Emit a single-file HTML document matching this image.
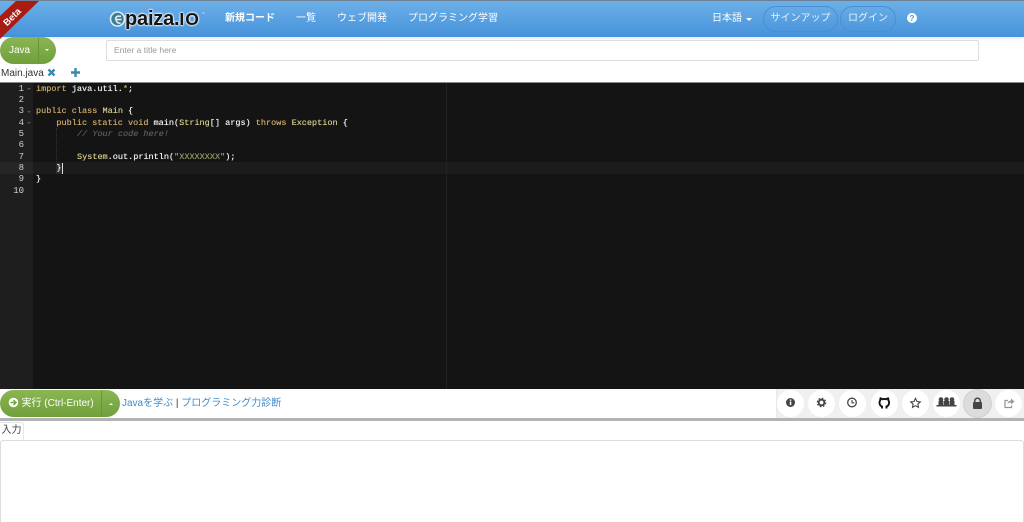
<!DOCTYPE html>
<html lang="ja"><head><meta charset="utf-8"><title>paiza.io</title>
<style>
*{box-sizing:border-box}
html,body{margin:0;padding:0;width:1024px;height:522px;overflow:hidden;background:#fff;font-family:"Liberation Sans","Noto Sans CJK JP",sans-serif;color:#333}
body{position:relative}
.a{position:absolute;white-space:nowrap}
#nav{left:0;top:0;width:1024px;height:37px;background:linear-gradient(#6cb0e8,#4692da);border-top:1px solid #6d7f92;box-shadow:0 1px 4px rgba(0,0,0,.12)}
.n{color:#fff;font-size:10px;line-height:12px;top:13px}
.b{font-weight:bold}
.pill{top:6px;height:26px;border-radius:13px;border:1px solid #4a8fd3;color:#eaf3fb;font-size:10px;line-height:24px;text-align:center}
.green{background:linear-gradient(#8ab653,#709f3c);color:#fff}
#ed{left:0;top:82px;width:1024px;height:307px;background:#141414;border-top:1px solid #888}
#gut{left:0;top:83px;width:33px;height:306px;background:#1e1e1e}
.ln{left:0;width:24px;text-align:right;color:#d0d0d0;font:9px/11.35px "Liberation Mono",monospace;margin-top:.5px}
.c{font:8.53px/11.35px "Liberation Mono",monospace;color:#f4f4f4;margin-top:.5px;text-shadow:0 0 .4px currentColor}
.k{color:#cda869}.t{color:#e9c062}.s{color:#8f9d6a}.m{color:#5f5a60;font-style:italic}.y{color:#d5c98a}
.rb{top:390px;width:27px;height:27px;border-radius:50%;background:#fff}
.rb svg{position:absolute;left:0;top:0}
a{color:#428bca;text-decoration:none}
</style></head><body>
<div class="a" id="nav"></div>

<svg class="a" style="left:0;top:0" width="42" height="42" viewBox="0 0 42 42"><polygon points="16,1 39,1 0,39 0,16" fill="#a81c14"/><text x="0" y="0" transform="translate(7,26.5) rotate(-45)" font-family="Liberation Sans" font-weight="bold" font-size="9.5" fill="#fff">Beta</text></svg>

<svg class="a" style="left:109px;top:9px" width="17" height="20" viewBox="0 0 17 20"><circle cx="8.500" cy="10" r="7" fill="#3f7d92" stroke="#d9eefa" stroke-width="1.600"/><path d="M12.500 10.500H6.500M6.500 10.500C6.500 8 8 6.500 12 7.500M7 11C8 14 10 14.500 11.500 14" stroke="#e4f3fb" stroke-width="1.500" fill="none"/></svg>
<div class="a b" style="left:125px;top:8px;font-size:20px;line-height:22px;letter-spacing:-.2px;color:#151515;text-shadow:0 0 2px #fff,0 0 2px #fff,0 0 2px #fff">paiza.<span style="font-size:17.500px;letter-spacing:1px">IO</span></div>
<div class="a" style="left:201px;top:11px;font-size:4px;line-height:5px;color:#ddd">™</div>

<div class="a n b" style="left:225px">新規コード</div>
<div class="a n" style="left:296px">一覧</div>
<div class="a n" style="left:337px">ウェブ開発</div>
<div class="a n" style="left:408px">プログラミング学習</div>
<div class="a n" style="left:712px">日本語</div>
<div class="a" style="left:746px;top:18px;border:3px solid transparent;border-top-color:#fff"></div>
<div class="a pill" style="left:763px;width:75px">サインアップ</div>
<div class="a pill" style="left:840px;width:56px">ログイン</div>
<svg class="a" style="left:907px;top:13px" width="10" height="10" viewBox="0 0 10 10"><circle cx="5" cy="5" r="5" fill="#fff"/><text x="5" y="8.200" text-anchor="middle" font-family="Liberation Sans" font-weight="bold" font-size="8" fill="#4a94da">?</text></svg>

<div class="a green" style="left:0;top:37px;width:56px;height:27px;border-radius:14px;font-size:10px;line-height:27px;padding-left:9px">Java</div>
<div class="a" style="left:38px;top:38px;width:1px;height:25px;background:#68943a"></div>
<div class="a" style="left:44.500px;top:49px;border:2.500px solid transparent;border-top-color:#fff"></div>
<div class="a" style="left:106px;top:40px;width:873px;height:21px;border:1px solid #ddd;border-radius:2px;font-size:8.500px;line-height:19px;color:#999;padding-left:7px;background:#fff">Enter a title here</div>

<div class="a" style="left:1px;top:67px;font-size:10px;line-height:13px;color:#333">Main.java</div>
<svg class="a" style="left:47px;top:68px" width="9" height="9" viewBox="0 0 9 9"><path d="M1.500 1.500L7.500 7.500M7.500 1.500L1.500 7.500" stroke="#3a8bab" stroke-width="2.400"/></svg>
<svg class="a" style="left:71px;top:68px" width="9" height="9" viewBox="0 0 9 9"><path d="M4.500 0V9M0 4.500H9" stroke="#3a8bab" stroke-width="2.400"/></svg>

<div class="a" id="ed"></div>
<div class="a" id="gut"></div>
<div class="a" style="left:33px;top:162px;width:991px;height:12px;background:#1c1c1c"></div>
<div class="a" style="left:0;top:162px;width:33px;height:12px;background:#262626"></div>
<div class="a" style="left:446px;top:83px;width:1px;height:306px;background:#222"></div>
<div class="a" style="left:56px;top:128px;width:1px;height:34px;border-left:1px dotted #333"></div>

<div class="a ln" style="top:83px">1</div><div class="a ln" style="top:94.300px">2</div><div class="a ln" style="top:105.700px">3</div><div class="a ln" style="top:117px">4</div><div class="a ln" style="top:128.400px">5</div><div class="a ln" style="top:139.700px">6</div><div class="a ln" style="top:151.100px">7</div><div class="a ln" style="top:162.400px">8</div><div class="a ln" style="top:173.800px">9</div><div class="a ln" style="top:185.100px">10</div>
<div class="a" style="left:27px;top:88px;border:2px solid transparent;border-top-color:#555"></div>
<div class="a" style="left:27px;top:111px;border:2px solid transparent;border-top-color:#555"></div>
<div class="a" style="left:27px;top:122px;border:2px solid transparent;border-top-color:#555"></div>

<div class="a c" style="left:36px;top:83px"><span class="k">import</span> java.util.<span class="k">*</span>;</div>
<div class="a c" style="left:36px;top:105.700px"><span class="k">public</span> <span class="k">class</span> <span class="y">Main</span> {</div>
<div class="a c" style="left:56.400px;top:117px"><span class="k">public</span> <span class="k">static</span> <span class="k">void</span> main(<span class="y">String</span>[] args) <span class="k">throws</span> <span class="y">Exception</span> {</div>
<div class="a c m" style="left:77px;top:128.400px">// Your code here!</div>
<div class="a c" style="left:77px;top:151.100px"><span class="y">System</span>.out.println(<span class="s">"XXXXXXXX"</span>);</div>
<div class="a" style="left:56px;top:163px;width:6px;height:11px;background:#2c2c2c"></div>
<div class="a c" style="left:56.400px;top:162.400px">}</div>
<div class="a" style="left:62px;top:163px;width:1px;height:11px;background:#ddd"></div>
<div class="a c" style="left:36px;top:173.800px">}</div>

<div class="a green" style="left:0;top:390px;width:120px;height:27px;border-radius:14px;font-size:10px;line-height:27px;padding-left:21.500px">実行 (Ctrl-Enter)</div>
<svg class="a" style="left:8px;top:397px" width="11" height="11" viewBox="0 0 11 11"><circle cx="5.500" cy="5.500" r="4.800" fill="#fff"/><path d="M2.500 5.500H8M5.500 3L8 5.500L5.500 8" stroke="#76a541" stroke-width="1.500" fill="none"/></svg>
<div class="a" style="left:101px;top:391px;width:1px;height:25px;background:#68943a"></div>
<div class="a" style="left:108.500px;top:401px;border:2.500px solid transparent;border-bottom-color:#fff"></div>
<div class="a" style="left:122px;top:397px;font-size:10px;line-height:13px;color:#333"><a href="#">Javaを学ぶ</a> | <a href="#">プログラミング力診断</a></div>

<div class="a" style="left:776px;top:389px;width:248px;height:29px;background:#f0f0f0;border-left:1px solid #e8e8e8"></div>
<div class="a rb" style="left:777px"><svg width="27" height="27"><circle cx="13.500" cy="12.500" r="4.500" fill="#444"/><rect x="12.800" y="11.500" width="1.500" height="3.500" fill="#fff"/><rect x="12.800" y="9.500" width="1.500" height="1.300" fill="#fff"/></svg></div>
<div class="a rb" style="left:808px"><svg width="27" height="27"><circle cx="13.500" cy="12.500" r="2.800" fill="none" stroke="#444" stroke-width="1.800"/><circle cx="13.500" cy="12.500" r="4.200" fill="none" stroke="#444" stroke-width="1.200" stroke-dasharray="1.800 1.500"/></svg></div>
<div class="a rb" style="left:839px"><svg width="27" height="27"><circle cx="13" cy="12.500" r="4.300" fill="none" stroke="#444" stroke-width="1.300"/><path d="M13 10V12.800H15.200" fill="none" stroke="#444" stroke-width="1.100"/></svg></div>
<div class="a rb" style="left:871px"><svg width="27" height="27"><path d="M11 18.500V16.500C9 15.800 8.500 14.500 8.500 12.500C8.500 11.500 8.800 10.800 9.300 10.200C9.200 9.500 9.300 8.800 9.500 8.300C10.300 8.400 11 8.800 11.500 9.200C12.600 8.900 14 8.900 15.100 9.200C15.700 8.800 16.300 8.400 17.100 8.300C17.400 8.800 17.400 9.500 17.300 10.200C17.800 10.800 18.100 11.500 18.100 12.500C18.100 14.500 17.500 15.800 15.500 16.500V18.500" fill="none" stroke="#111" stroke-width="1.900"/></svg></div>
<div class="a rb" style="left:902px"><svg width="27" height="27"><path d="M13.500 8.300L15 11.500L18.300 11.900L15.900 14.100L16.500 17.300L13.500 15.700L10.500 17.300L11.100 14.100L8.700 11.900L12 11.500Z" fill="none" stroke="#444" stroke-width="1.100"/></svg></div>
<div class="a rb" style="left:933px"><svg width="27" height="27"><g fill="#444"><circle cx="8" cy="9.500" r="2.300"/><circle cx="13.500" cy="9.500" r="2.300"/><circle cx="19" cy="9.500" r="2.300"/><rect x="5.500" y="11" width="5" height="4.500"/><rect x="11" y="11" width="5" height="4.500"/><rect x="16.500" y="11" width="5" height="4.500"/><rect x="3.500" y="15" width="20" height="1.500"/></g></svg></div>
<div class="a rb" style="left:964px;background:#dcdcdc;box-shadow:0 0 0 1px #d0d0d0"><svg width="27" height="27"><rect x="9" y="12" width="9" height="7" rx="1" fill="#444"/><path d="M10.800 12V10.500C10.800 7.500 16.200 7.500 16.200 10.500V12" fill="none" stroke="#444" stroke-width="1.500"/></svg></div>
<div class="a rb" style="left:995px"><svg width="27" height="27"><path d="M16.500 15.500V17.500H10V10.500H13" fill="none" stroke="#999" stroke-width="1.300"/><path d="M12.500 14C12.800 11.500 14.500 10.500 16 10.500V8.500L19.500 11.500L16 14.500V12.500C14.500 12.500 13.300 13 12.500 14Z" fill="#999"/></svg></div>

<div class="a" style="left:0;top:418px;width:1024px;height:3px;background:#b3b3b3"></div>
<div class="a" style="left:0;top:422px;width:24px;height:18px;background:#fff;border:1px solid #e6e6e6;border-bottom:0;border-left:0;border-radius:0 3px 0 0;font-size:10px;line-height:16px;padding-left:1.500px;color:#444">入力</div>
<div class="a" style="left:0;top:440px;width:1024px;height:82px;border:1px solid #ddd;border-bottom:0;border-radius:3px 3px 0 0;background:#fff"></div>
</body></html>
